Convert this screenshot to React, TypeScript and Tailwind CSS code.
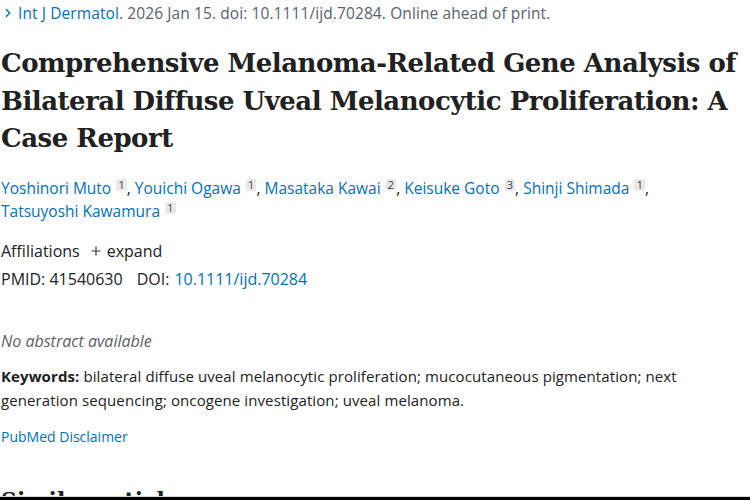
import { ChevronRight, Plus } from "lucide-react";

const AUTHORS = [
  { name: "Yoshinori Muto", aff: "1" },
  { name: "Youichi Ogawa", aff: "1" },
  { name: "Masataka Kawai", aff: "2" },
  { name: "Keisuke Goto", aff: "3" },
  { name: "Shinji Shimada", aff: "1" },
  { name: "Tatsuyoshi Kawamura", aff: "1" },
];

const sans = { fontFamily: '"Open Sans", "Noto Sans", sans-serif' };

function Sup({ n }: { n: string }) {
  return (
    <span className="relative -top-[5px] ml-[5px] inline-block rounded-[2px] bg-[#e9e9e9] px-[2px] text-[11.5px] leading-[12px] text-[#444]">
      {n}
    </span>
  );
}

export default function App() {
  return (
    <div className="h-[500px] w-[750px] overflow-hidden bg-white text-[#212121]" style={sans}>
      <div className="flex h-[497px] flex-col overflow-hidden border-b border-[#d6d6d6] pl-[1px]">
        {/* citation line */}
        <div className="mt-[3px] flex items-center text-[15.5px] leading-[20px] tracking-[0.1px] text-[#5b616b]">
          <ChevronRight className="h-[14px] w-[14px] text-[#0071bc]" strokeWidth={2.5} />
          <a className="ml-[3px] text-[#0071bc]">Int J Dermatol</a>
          <span>. 2026 Jan 15. doi: 10.1111/ijd.70284. Online ahead of print.</span>
        </div>

        {/* title */}
        <h1
          className="mt-[22px] text-[26px] font-bold leading-[37.5px] tracking-[-0.5px] text-[#212121]"
          style={{ fontFamily: '"DejaVu Serif", serif' }}
        >
          Comprehensive Melanoma-Related Gene Analysis of Bilateral Diffuse Uveal Melanocytic
          Proliferation: A Case Report
        </h1>

        {/* authors */}
        <div className="mt-[19px] text-[15.5px] leading-[23px]">
          {AUTHORS.map((a, i) => (
            <span key={a.name}>
              <span className="whitespace-nowrap">
                <a className="text-[#0071bc]">{a.name}</a>
                <Sup n={a.aff} />
                {i < AUTHORS.length - 1 ? "," : ""}
              </span>
              {i < AUTHORS.length - 1 ? " " : ""}
            </span>
          ))}
        </div>

        <div className="mt-[16px] flex items-center text-[16px] leading-[24px]">
          <span>Affiliations</span>
          <Plus className="ml-[9px] h-[14px] w-[14px] text-[#333]" strokeWidth={2} />
          <span className="ml-[4px]">expand</span>
        </div>

        <div className="mt-[4px] flex text-[16px] leading-[24px]">
          <span>PMID: 41540630</span>
          <span className="ml-[14px]">DOI:</span>
          <a className="ml-[5px] text-[#0071bc]">10.1111/ijd.70284</a>
        </div>

        <p className="mt-[38px] text-[16px] italic leading-[24px] text-[#5b616b]">No abstract available</p>

        <p className="mt-[11px] text-[15px] leading-[24px] tracking-[0.1px]">
          <strong className="font-bold">Keywords:</strong> bilateral diffuse uveal melanocytic
          proliferation; mucocutaneous pigmentation; next generation sequencing; oncogene
          investigation; uveal melanoma.
        </p>

        <a className="mt-[15px] text-[14px] leading-[20px] text-[#0071bc]">PubMed Disclaimer</a>

        <h2
          className="mt-[39px] text-[22px] font-bold leading-[28px]"
          style={{ fontFamily: '"DejaVu Serif", serif' }}
        >
          Similar articles
        </h2>
      </div>
      <div className="h-[3px] bg-black" />
    </div>
  );
}
